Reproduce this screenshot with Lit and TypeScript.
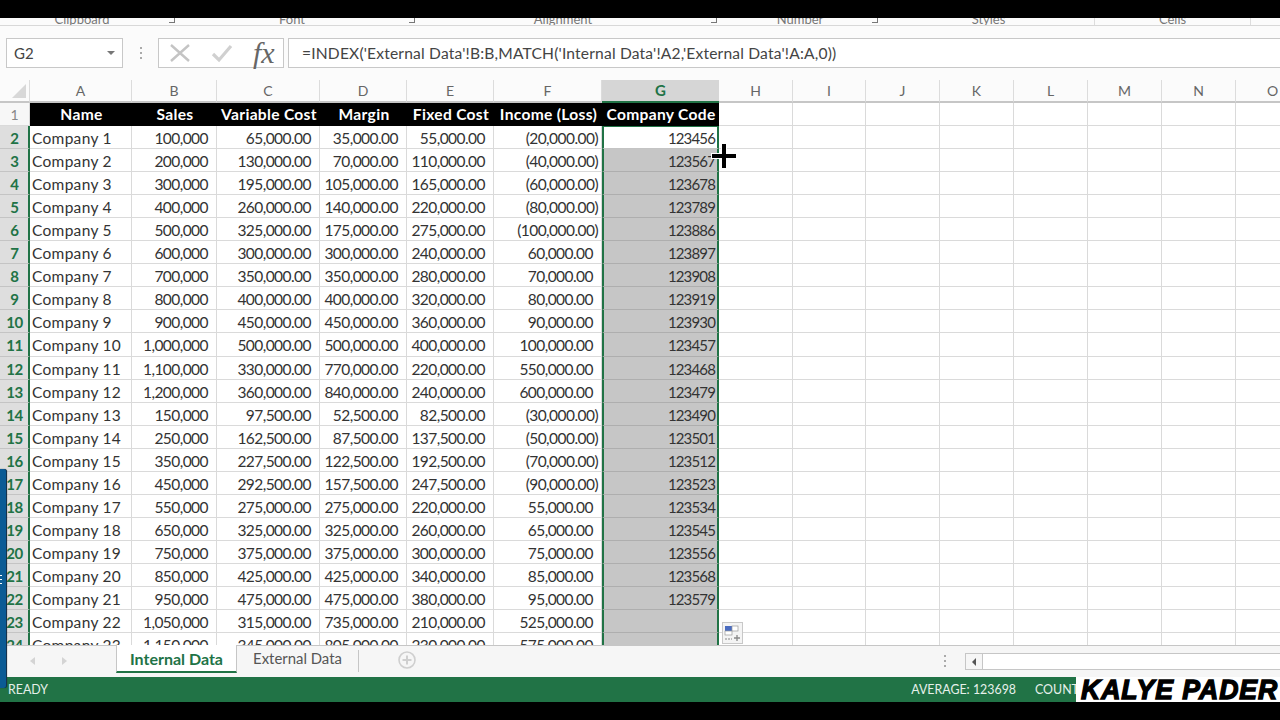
import { LitElement, html, css } from "lit";
import { customElement } from "lit/decorators.js";

const F = (n: number) => n.toLocaleString("en-US", { minimumFractionDigits: 2, maximumFractionDigits: 2 });
const S = (n: number) => n.toLocaleString("en-US");

type Row = [number, number, number, number, number, number | null];
const rows: Row[] = [
  [100000, 65000, 35000, 55000, -20000, 123456],
  [200000, 130000, 70000, 110000, -40000, 123567],
  [300000, 195000, 105000, 165000, -60000, 123678],
  [400000, 260000, 140000, 220000, -80000, 123789],
  [500000, 325000, 175000, 275000, -100000, 123886],
  [600000, 300000, 300000, 240000, 60000, 123897],
  [700000, 350000, 350000, 280000, 70000, 123908],
  [800000, 400000, 400000, 320000, 80000, 123919],
  [900000, 450000, 450000, 360000, 90000, 123930],
  [1000000, 500000, 500000, 400000, 100000, 123457],
  [1100000, 330000, 770000, 220000, 550000, 123468],
  [1200000, 360000, 840000, 240000, 600000, 123479],
  [150000, 97500, 52500, 82500, -30000, 123490],
  [250000, 162500, 87500, 137500, -50000, 123501],
  [350000, 227500, 122500, 192500, -70000, 123512],
  [450000, 292500, 157500, 247500, -90000, 123523],
  [550000, 275000, 275000, 220000, 55000, 123534],
  [650000, 325000, 325000, 260000, 65000, 123545],
  [750000, 375000, 375000, 300000, 75000, 123556],
  [850000, 425000, 425000, 340000, 85000, 123568],
  [950000, 475000, 475000, 380000, 95000, 123579],
  [1050000, 315000, 735000, 210000, 525000, null],
  [1150000, 345000, 805000, 230000, 575000, null],
];
const heads = ["Name", "Sales", "Variable Cost", "Margin", "Fixed Cost", "Income (Loss)", "Company Code"];
const letters = "ABCDEFGHIJKLMNO".split("");
const blanks = [0, 1, 2, 3, 4, 5, 6, 7];

@customElement("app-root")
export class AppRoot extends LitElement {
  static styles = css`
    :host { display: block; width: 1280px; height: 720px; overflow: hidden; background: #000;
      font-family: Lato, "Open Sans", sans-serif; color: #333; }
    .app { position: relative; width: 1280px; height: 720px; display: flex; flex-direction: column; }
    .top { height: 18px; flex: none; background: #000; }
    .ribbon { height: 7px; flex: none; overflow: hidden; background: #fbfbfb; border-bottom: 1px solid #d8d8d8;
      display: grid; grid-template-columns: 164px 16px 224px 16px 286px 16px 11px 134px 16px 212px 156px 29px; }
    .ribbon span { display: block; margin-top: -6px; line-height: 14px; height: 14px; font-size: 13px; color: #777; text-align: center; }
    .ribbon .lc { margin-top: 0; height: 5px; }
    .ribbon .lc i { display: block; width: 5px; height: 4px; margin: 0 auto; border-right: 1px solid #777; border-bottom: 1px solid #777; }
    .ribbon .sep { border-right: 1px solid #ddd; }
    .fbar { height: 30px; flex: none; margin-top: 12px; padding-left: 6px; display: flex; align-items: stretch; }
    .main { flex: none; background: #fbfbfb; }
    .namebox { width: 117px; box-sizing: border-box; border: 1px solid #c8c8c8; background: #fff; display: flex;
      align-items: center; justify-content: space-between; padding: 0 7px; font-size: 15px; color: #444; }
    .namebox i { width: 0; height: 0; border-left: 4px solid transparent; border-right: 4px solid transparent; border-top: 4px solid #777; }
    .dots { width: 35px; display: flex; flex-direction: column; align-items: center; justify-content: center; gap: 3px; }
    .dots i { width: 2px; height: 2px; background: #aaa; display: block; }
    .fnbox { width: 126px; box-sizing: border-box; border: 1px solid #c8c8c8; background: #fff; display: flex; align-items: center; padding-left: 10px; gap: 20px; }
    .fx { font-family: "Liberation Serif", serif; font-style: italic; font-size: 30px; line-height: 26px; color: #666; }
    .input { flex: 1; margin-left: 4px; box-sizing: border-box; border: 1px solid #c8c8c8; border-right: 0; background: #fff; padding-left: 13px;
      display: flex; align-items: center; font-size: 15.6px; letter-spacing: 0.18px; color: #444; white-space: nowrap; }
    .colhead { margin-top: 12px; height: 23px; flex: none; display: grid; overflow: hidden;
      grid-template-columns: 30px 102px 85px 103px 87px 87px 108px 117px 74px 73px 74px 74px 74px 74px 74px 74px;
      background: #fbfbfb; }
    .colhead > div { box-sizing: border-box; border-right: 1px solid #dcdcdc; border-bottom: 2px solid #c6c6c6; text-align: center;
      line-height: 21px; font-size: 14px; color: #666; }
    .colhead .on { background: #d6d6d6; color: #217346; font-weight: 700; font-size: 15px; border-bottom: 2px solid #217346; border-right: 0; }
    .corner { display: flex; align-items: center; justify-content: center; }
    .corner svg { display: block; margin-left: 8px; margin-top: 1px; }
    .sheet { height: 542px; flex: none; overflow: hidden; background: #fff; display: grid;
      grid-template-columns: 30px 102px 85px 103px 87px 87px 108px 117px 74px 73px 74px 74px 74px 74px 74px 74px;
      grid-auto-rows: 23.05px; }
    .sheet > div { box-sizing: border-box; border-right: 1px solid #dadada; border-bottom: 1px solid #dadada; font-size: 15.5px; line-height: 25px; white-space: nowrap; overflow: hidden; color: #333; }
    .sheet .rh { background: #f7f7f7; color: #888; text-align: center; font-size: 14px; line-height: 23px; border-right: 1px solid #dadada; letter-spacing: 0; }
    .sheet .rh.sel { background: #dedede; color: #217346; font-weight: 700; font-size: 15px; line-height: 25px; letter-spacing: -0.4px; border-right: 2px solid #217346; border-bottom-color: #c4c4c4; padding-left: 1px; }
    .sheet .hd { background: #000; color: #fff; font-weight: 700; font-size: 15.6px; line-height: 23px; letter-spacing: 0.3px; text-align: center; padding-left: 2px; border-color: #000; }
    .sheet .txt { padding-left: 2px; letter-spacing: 0.3px; }
    .sheet .num { text-align: right; padding-right: 8px; letter-spacing: -0.55px; }
    .sheet .neg { text-align: right; padding-right: 3px; letter-spacing: -0.55px; }
    .sheet .g { text-align: right; padding-right: 2px; font-size: 15px; letter-spacing: -0.85px; border-left: 2px solid #217346; border-right: 2px solid #217346; background: #c6c6c6; border-bottom-color: #aeaeae; }
    .sheet .g.first { background: #fff; border-bottom-color: #c4c4c4; border-top: 1px solid #217346; line-height: 23px; }
    .tabs { height: 32px; flex: none; box-sizing: border-box; border-top: 1px solid #c6c6c6; background: #f6f6f6; display: flex; align-items: flex-start; }
    .nav { width: 116px; display: flex; align-items: center; height: 29px; padding-left: 30px; gap: 27px; box-sizing: border-box; flex: none; }
    .nav i { width: 0; height: 0; border-top: 4px solid transparent; border-bottom: 4px solid transparent; display: block; }
    .nav .l { border-right: 5px solid #d4d4d4; }
    .nav .r { border-left: 5px solid #d4d4d4; }
    .tab { height: 26px; margin-top: -1px; font-size: 14.9px; line-height: 27px; text-align: center; flex: none; }
    .tab.on { width: 119px; background: #fff; color: #217346; font-weight: 700; font-size: 16px; border-left: 1px solid #c6c6c6; border-right: 1px solid #c6c6c6; border-bottom: 2px solid #217346; }
    .tab.off { width: 121px; color: #555; }
    .divv { width: 1px; height: 22px; margin-top: 4px; background: #c6c6c6; flex: none; }
    .plus { width: 18px; height: 18px; margin: 5px 0 0 39px; flex: none; }
    .hdots { margin-left: auto; width: 4px; height: 29px; display: flex; flex-direction: column; justify-content: center; gap: 3px; flex: none; }
    .hdots i { width: 2px; height: 2px; background: #aaa; display: block; }
    .scroll { margin-left: 17px; width: 315px; height: 17px; margin-top: 7px; box-sizing: border-box; border: 1px solid #c6c6c6; border-right: 0; background: #fff; display: flex; flex: none; }
    .sbtn { width: 16px; border-right: 1px solid #c6c6c6; display: flex; align-items: center; justify-content: center; background: #f6f6f6; }
    .sbtn i { width: 0; height: 0; border-top: 4px solid transparent; border-bottom: 4px solid transparent; border-right: 4px solid #555; }
    .status { height: 25px; flex: none; background: #217346; display: flex; align-items: center; color: #e6f0ea; font-size: 12.4px; padding-left: 8px; }
    .avg { margin-left: auto; margin-right: 19px; }
    .count { width: 41px; overflow: hidden; white-space: nowrap; }
    .mark { width: 204px; height: 25px; background: #fff; overflow: hidden; padding-left: 5px; box-sizing: border-box; }
    .mark b { display: block; width: 230px; color: #000; font-family: "Liberation Sans", sans-serif; font-weight: 700; font-style: italic;
      font-size: 28px; line-height: 25px; letter-spacing: 1px; white-space: nowrap; transform: scaleX(0.95); transform-origin: left center; -webkit-text-stroke: 1.4px #000; }
    .bottom { flex: 1; background: #000; }
    .blue { position: absolute; left: 0; top: 469px; width: 6px; height: 219px; background: #0b5b95; border-right: 1px solid #16324c; border-radius: 0 3px 3px 0; box-shadow: 0 0 1px #102030; }
    .blue i { position: absolute; left: 0; width: 2px; height: 1px; background: #fff; }
    .blue .b1 { top: 106px; } .blue .b2 { top: 110px; } .blue .b3 { top: 114px; }
    .cursor { position: absolute; left: 709px; top: 141px; }
    .paste { position: absolute; left: 722px; top: 622px; }
  `;

  private grid() {
    const cells: unknown[] = [];
    cells.push(html`<div class="rh">1</div>`);
    heads.forEach((h) => cells.push(html`<div class="hd">${h}</div>`));
    blanks.forEach(() => cells.push(html`<div></div>`));
    rows.forEach((r, i) => {
      cells.push(html`<div class="rh sel">${i + 2}</div>`);
      cells.push(html`<div class="txt">Company ${i + 1}</div>`);
      cells.push(html`<div class="num">${S(r[0])}</div>`);
      cells.push(html`<div class="num">${F(r[1])}</div>`);
      cells.push(html`<div class="num">${F(r[2])}</div>`);
      cells.push(html`<div class="num">${F(r[3])}</div>`);
      cells.push(r[4] < 0 ? html`<div class="neg">(${F(-r[4])})</div>` : html`<div class="num">${F(r[4])}</div>`);
      cells.push(html`<div class="g ${i === 0 ? "first" : ""}">${r[5] ?? ""}</div>`);
      blanks.forEach(() => cells.push(html`<div></div>`));
    });
    return cells;
  }

  render() {
    return html`<div class="app">
      <div class="top"></div>
      <div class="main">
        <div class="ribbon">
          <span>Clipboard</span><span class="lc"><i></i></span>
          <span>Font</span><span class="lc"><i></i></span>
          <span>Alignment</span><span class="lc"><i></i></span>
          <span></span><span>Number</span><span class="lc"><i></i></span>
          <span class="sep">Styles</span><span class="sep">Cells</span><span></span>
        </div>
        <div class="fbar">
          <div class="namebox">G2<i></i></div>
          <div class="dots"><i></i><i></i><i></i></div>
          <div class="fnbox">
            <svg width="22" height="20" viewBox="0 0 22 20" fill="none" stroke="#c4c4c4" stroke-width="2.4">
              <path d="M2 2 L20 18 M20 2 L2 18"></path>
            </svg>
            <svg width="22" height="20" viewBox="0 0 22 20" fill="none" stroke="#d0d0d0" stroke-width="3.2">
              <path d="M2 11 L8 17 L20 3"></path>
            </svg>
            <span class="fx">fx</span>
          </div>
          <div class="input">=INDEX('External Data'!B:B,MATCH('Internal Data'!A2,'External Data'!A:A,0))</div>
        </div>
        <div class="colhead">
          <div class="corner">
            <svg width="14" height="14" viewBox="0 0 14 14"><path d="M14 0 L14 14 L0 14 Z" fill="#d8d8d8"></path></svg>
          </div>
          ${letters.map((l) => html`<div class="${l === "G" ? "on" : ""}">${l}</div>`)}
        </div>
        <div class="sheet">${this.grid()}</div>
        <div class="tabs">
          <div class="nav"><i class="l"></i><i class="r"></i></div>
          <div class="tab on">Internal Data</div>
          <div class="tab off">External Data</div>
          <div class="divv"></div>
          <svg class="plus" viewBox="0 0 18 18" fill="none" stroke="#cfcfcf" stroke-width="1.6">
            <circle cx="9" cy="9" r="8"></circle><path d="M9 4.5 V13.5 M4.5 9 H13.5" stroke-width="2"></path>
          </svg>
          <div class="hdots"><i></i><i></i><i></i></div>
          <div class="scroll"><div class="sbtn"><i></i></div></div>
        </div>
        <div class="status">
          <span>READY</span>
          <span class="avg">AVERAGE: 123698</span>
          <span class="count">COUNT: 22</span>
          <span class="mark"><b>KALYE PADER</b></span>
        </div>
      </div>
      <div class="bottom"></div>
      <div class="blue"><i class="b1"></i><i class="b2"></i><i class="b3"></i></div>
      <svg class="cursor" width="30" height="30" viewBox="0 0 30 30">
        <path d="M15 2 V28 M2 15 H28" stroke="#fff" stroke-width="6" fill="none"></path>
        <path d="M15 3 V27 M3 15 H27" stroke="#000" stroke-width="4" fill="none"></path>
      </svg>
      <svg class="paste" width="21" height="22" viewBox="0 0 21 22">
        <rect x="0.5" y="0.5" width="20" height="21" fill="#f4f4f4" stroke="#c8c8c8"></rect>
        <rect x="3" y="4" width="7" height="5" fill="#4a6cc0"></rect>
        <rect x="10" y="4" width="6" height="5" fill="#fff" stroke="#999" stroke-width="0.7"></rect>
        <rect x="3" y="9" width="7" height="4" fill="#fff" stroke="#999" stroke-width="0.7"></rect>
        <path d="M3 17 H10" stroke="#aaa" stroke-dasharray="2 1" stroke-width="1.5"></path>
        <path d="M15 13 V19 M12 16 H18" stroke="#888" stroke-width="1.3"></path>
      </svg>
    </div>`;
  }
}
